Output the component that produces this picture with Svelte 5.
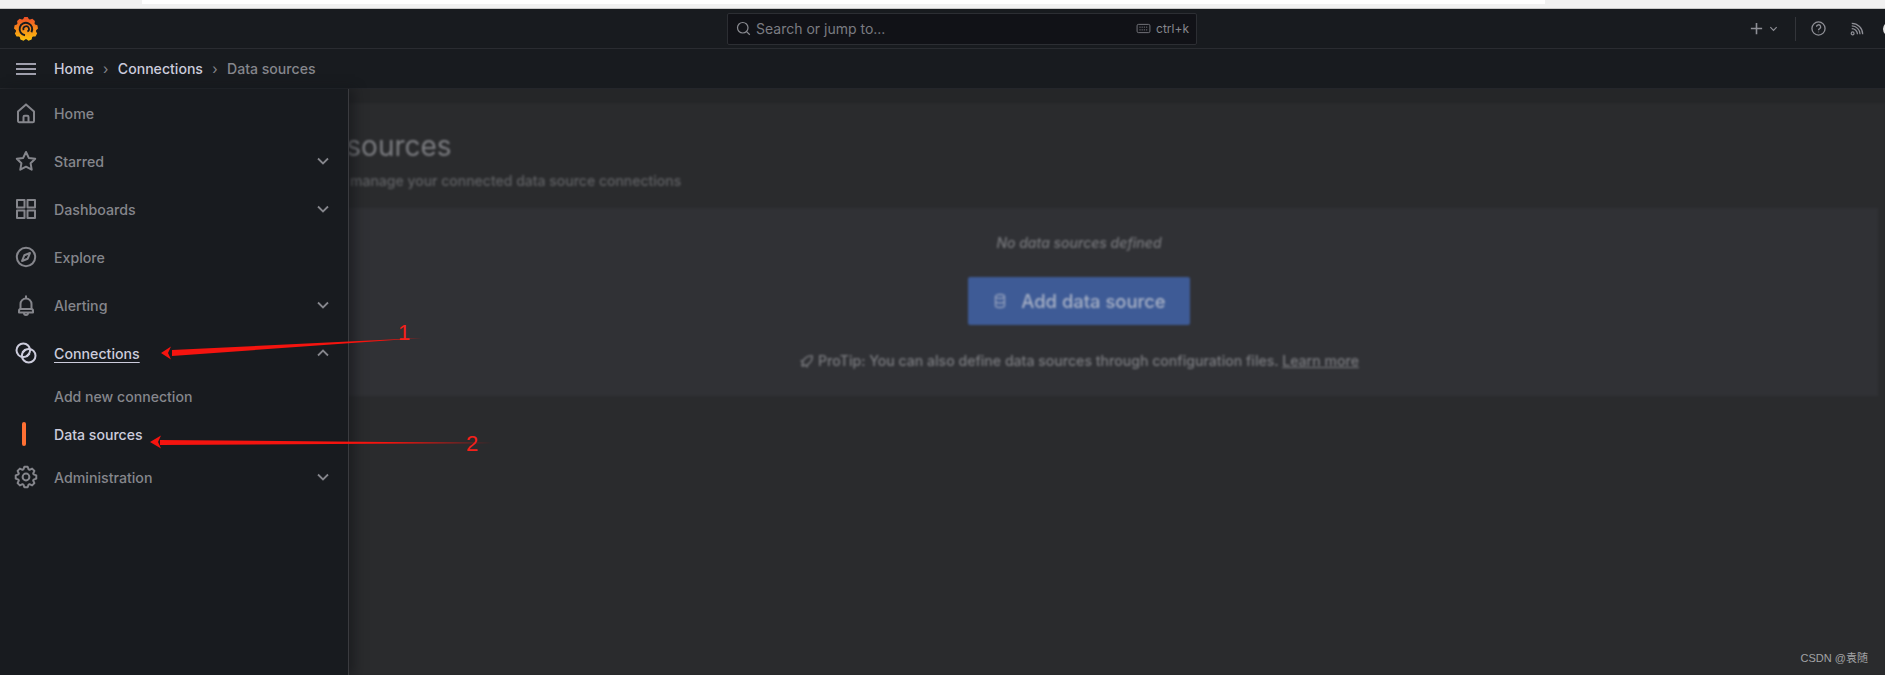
<script>
  const navTop = [
    { label: 'Home', icon: 'home' },
    { label: 'Starred', icon: 'star', chevron: 'down' },
    { label: 'Dashboards', icon: 'apps', chevron: 'down' },
    { label: 'Explore', icon: 'compass' },
    { label: 'Alerting', icon: 'bell', chevron: 'down' },
    { label: 'Connections', icon: 'link', chevron: 'up', active: true }
  ];

  function gearPath(cx, cy, teeth, outer, inner) {
    const step = (Math.PI * 2) / teeth;
    let d = '';
    for (let i = 0; i < teeth; i++) {
      const a = i * step - Math.PI / 2;
      const pts = [
        [a - step * 0.42, inner],
        [a - step * 0.2, outer],
        [a + step * 0.2, outer],
        [a + step * 0.42, inner]
      ];
      for (const [t, r] of pts) {
        d += (d ? 'L' : 'M') + (cx + r * Math.cos(t)).toFixed(2) + ' ' + (cy + r * Math.sin(t)).toFixed(2);
      }
    }
    return d + 'Z';
  }

  const gear = gearPath(12, 12, 8, 10.4, 8);
  const flame = gearPath(12, 12, 9, 12, 10.2);
</script>

{#snippet icon(name)}
  <svg class="nav-icon" viewBox="0 0 24 24" aria-hidden="true">
    {#if name === 'home'}
      <path d="M4 20V10.4L12 3.4l8 7V20a1.200 1.200 0 0 1-1.200 1.200H5.200A1.200 1.200 0 0 1 4 20Z" />
      <path d="M9.500 21v-5a1.200 1.200 0 0 1 1.200-1.200h2.600A1.200 1.200 0 0 1 14.500 16v5" />
    {:else if name === 'star'}
      <path d="M12 3l2.800 5.900 6.400.9-4.600 4.500 1.100 6.400L12 17.700l-5.700 3 1.100-6.400-4.600-4.500 6.400-.9Z" />
    {:else if name === 'apps'}
      <rect x="3" y="3" width="7.500" height="7.500" />
      <rect x="13.500" y="3" width="7.500" height="7.500" />
      <rect x="3" y="13.500" width="7.500" height="7.500" />
      <rect x="13.500" y="13.500" width="7.500" height="7.500" />
    {:else if name === 'compass'}
      <circle cx="12" cy="12" r="9.200" />
      <path d="M16 8l-2.300 5.700L8 16l2.300-5.700Z" />
    {:else if name === 'bell'}
      <path d="M6.500 16v-5a5.500 5.500 0 0 1 11 0v5" />
      <path d="M5 19.500v-1.700A1.800 1.800 0 0 1 6.800 16h10.400a1.800 1.800 0 0 1 1.800 1.800v1.700Z" />
      <path d="M12 2.500v3M10 20a2 2 0 0 0 4 0" />
    {:else if name === 'link'}
      <circle cx="9.300" cy="9.300" r="6.800" />
      <circle cx="14.700" cy="14.700" r="6.800" />
      <path d="M8.500 11.500l3-3M12.500 15.500l3-3" stroke-width="2.400" />
    {:else if name === 'gear'}
      <path d={gear} />
      <circle cx="12" cy="12" r="3.400" />
    {/if}
  </svg>
{/snippet}

{#snippet chevron(dir)}
  <svg class="chevron" viewBox="0 0 16 16" aria-hidden="true">
    <path d={dir === 'up' ? 'M3 10.500l5-5 5 5' : 'M3 5.500l5 5 5-5'} />
  </svg>
{/snippet}

<div class="page">
  <div class="browser-edge"><div class="browser-field"></div></div>

  <header class="topbar">
    <svg class="logo" viewBox="0 0 24 24" aria-label="Grafana">
      <defs>
        <linearGradient id="flame" x1="0.5" y1="0" x2="0.5" y2="1">
          <stop offset="0" stop-color="#ee4f27" />
          <stop offset="1" stop-color="#fcc30c" />
        </linearGradient>
      </defs>
      <path d={flame} fill="url(#flame)" />
      <path d="M17.400 15.200A6.300 6.300 0 1 0 11 18.300" fill="none" stroke="#181b1f" stroke-width="1.900" />
      <path d="M9.600 13.200a2.800 2.800 0 1 1 3.800 1.400" fill="none" stroke="#181b1f" stroke-width="1.700" />
    </svg>

    <div class="search">
      <svg class="search-icon" viewBox="0 0 16 16" aria-hidden="true">
        <circle cx="7.200" cy="7.200" r="5.600" />
        <path d="M11.300 11.300l3.400 3.400" />
      </svg>
      <span class="search-text">Search or jump to...</span>
      <svg class="kbd-icon" viewBox="0 0 16 12" aria-hidden="true">
        <rect x="1" y="1.500" width="14" height="9" rx="1.500" />
        <path d="M3.500 4.500h9M3.500 7.500h9" stroke-dasharray="1.400 1" />
      </svg>
      <span class="search-key">ctrl+k</span>
    </div>

    <div class="top-actions">
      <svg class="plus" viewBox="0 0 16 16" aria-hidden="true"><path d="M8 2v12M2 8h12" /></svg>
      <svg class="mini-chevron" viewBox="0 0 10 10" aria-hidden="true"><path d="M1.500 3.500L5 7l3.500-3.500" /></svg>
      <span class="divider"></span>
      <svg class="help" viewBox="0 0 16 16" aria-hidden="true">
        <circle cx="8" cy="8" r="7" />
        <path d="M5.900 6.200a2.200 2.200 0 1 1 3.300 1.900c-.8.4-1.200.8-1.200 1.700" />
        <path d="M8 11.400v.6" />
      </svg>
      <svg class="rss" viewBox="0 0 16 16" aria-hidden="true">
        <circle cx="3" cy="13" r="1.600" />
        <path d="M2 7.500a6.500 6.500 0 0 1 6.500 6.500M2 4.500A9.500 9.500 0 0 1 11.500 14M2 1.500A12.500 12.500 0 0 1 14.500 14" />
      </svg>
      <span class="avatar"></span>
    </div>
  </header>

  <div class="crumbs">
    <svg class="burger" viewBox="0 0 20 12" aria-hidden="true"><path d="M0 1h20M0 6h20M0 11h20" /></svg>
    <a class="crumb">Home</a>
    <span class="sep">›</span>
    <a class="crumb">Connections</a>
    <span class="sep">›</span>
    <span class="crumb current">Data sources</span>
  </div>

  <div class="body">
    <main class="main">
      <div class="panel">
        <h1>Data sources</h1>
        <p class="subtitle">View and manage your connected data source connections</p>
        <section class="empty">
          <p class="empty-title">No data sources defined</p>
          <div class="cta">
            <svg viewBox="0 0 16 16" aria-hidden="true">
              <ellipse cx="8" cy="3.500" rx="4.500" ry="2" />
              <path d="M3.500 3.500v9c0 1.100 2 2 4.500 2s4.500-.9 4.500-2v-9M3.500 8c0 1.100 2 2 4.500 2s4.500-.9 4.500-2" />
            </svg>
            <span>Add data source</span>
          </div>
          <p class="tip">
            <svg viewBox="0 0 16 16" aria-hidden="true">
              <path d="M14 2c-4-.3-7 1.200-9 4.500L2.500 7.500l2 2L3 12l1 1 2.500-1.500 2 2 1-2.500C12.800 9 14.300 6 14 2Z" />
            </svg>
            <span>ProTip: You can also define data sources through configuration files. <u>Learn more</u></span>
          </p>
        </section>
      </div>
    </main>

    <nav class="sidebar">
      {#each navTop as item}
        <div class="nav-row" class:active={item.active}>
          {@render icon(item.icon)}
          <span class="nav-label">{item.label}</span>
          {#if item.chevron}{@render chevron(item.chevron)}{/if}
        </div>
      {/each}
      <div class="sub-row">Add new connection</div>
      <div class="sub-row current"><span class="marker"></span>Data sources</div>
      <div class="nav-row">
        {@render icon('gear')}
        <span class="nav-label">Administration</span>
        {@render chevron('down')}
      </div>
    </nav>
  </div>

  <svg class="notes" viewBox="0 0 1885 675" aria-hidden="true">
    <polygon points="422,338 172,350 172,356" />
    <polygon points="161,353 171,346.500 168,353 171,359.500" />
    <polygon points="493,443 160,440 160,445" />
    <polygon points="150,442 161,435.500 158,442 161,448.500" />
    <text x="404" y="340">1</text>
    <text x="472" y="451">2</text>
  </svg>

  <div class="watermark">CSDN @袁随</div>
</div>

<style>
  :global(body) {
    margin: 0;
    background: #2a2b2d;
  }

  .page {
    position: relative;
    display: flex;
    flex-direction: column;
    height: 675px;
    overflow: hidden;
    font-family: Inter, "Noto Sans", sans-serif;
    font-size: 14px;
    color: #ccccdc;
  }

  .browser-edge {
    flex: none;
    height: 9px;
    box-sizing: border-box;
    padding: 0 340px 0 142px;
    background: #f1f1f1;
    border-bottom: 1px solid #c8c8c8;
  }

  .browser-field {
    height: 4px;
    background: #fff;
  }

  .topbar {
    flex: none;
    height: 40px;
    box-sizing: border-box;
    position: relative;
    display: flex;
    align-items: center;
    justify-content: center;
    background: #181b1f;
    border-bottom: 1px solid #2a2c31;
  }

  .logo {
    position: absolute;
    left: 14px;
    top: 8px;
    width: 24px;
    height: 24px;
  }

  .search {
    width: 470px;
    height: 32px;
    margin-left: 39px;
    box-sizing: border-box;
    display: flex;
    align-items: center;
    padding: 0 7px 0 8px;
    background: #111217;
    border: 1px solid #2c2e33;
    border-radius: 2px;
    color: #7b7c82;
  }

  .search-icon {
    width: 15px;
    height: 15px;
    margin-right: 5px;
    fill: none;
    stroke: #8a8b91;
    stroke-width: 1.300;
  }

  .search-text {
    flex: 1;
    font-size: 14px;
  }

  .kbd-icon {
    width: 15px;
    height: 11px;
    margin-right: 5px;
    fill: none;
    stroke: #7b7c82;
    stroke-width: 1;
  }

  .search-key {
    font-size: 12px;
    color: #86878d;
  }

  .top-actions {
    position: absolute;
    right: 0;
    top: 0;
    bottom: 0;
    width: 136px;
    display: flex;
    align-items: center;
    overflow: hidden;
  }

  .top-actions svg {
    fill: none;
    stroke: #8e8f96;
    flex: none;
  }

  .plus {
    width: 15px;
    height: 15px;
    stroke-width: 1.700;
  }

  .mini-chevron {
    width: 9px;
    height: 9px;
    margin-left: 5px;
    stroke-width: 1.300;
  }

  .divider {
    flex: none;
    width: 1px;
    height: 24px;
    margin: 0 15px 0 17px;
    background: #33353a;
  }

  .help {
    width: 15px;
    height: 15px;
    stroke-width: 1.400;
  }

  .rss {
    width: 14px;
    height: 14px;
    margin-left: 24px;
    stroke-width: 1.400;
  }

  .avatar {
    flex: none;
    width: 24px;
    height: 14px;
    margin-left: 19px;
    border-radius: 7px;
    background: #e4e4e4;
  }

  .crumbs {
    flex: none;
    height: 40px;
    box-sizing: border-box;
    display: flex;
    align-items: center;
    padding-left: 16px;
    background: #181b1f;
    border-bottom: 1px solid #24262b;
  }

  .burger {
    width: 20px;
    height: 12px;
    margin-right: 18px;
    fill: none;
    stroke: #ccccdc;
    stroke-width: 1.600;
  }

  .crumb {
    font-size: 14.100px;
    font-weight: 500;
    color: #ccccdc;
  }

  .crumb.current {
    color: #85868c;
  }

  .sep {
    width: 24px;
    text-align: center;
    color: #85868c;
    font-size: 14px;
  }

  .body {
    position: relative;
    flex: 1;
    min-height: 0;
  }

  .main {
    height: 100%;
    box-sizing: border-box;
    padding-top: 14px;
    background: #252628;
  }

  .panel {
    height: 100%;
    box-sizing: border-box;
    background: #2a2b2d;
    filter: blur(1.300px);
    padding: 27px 7px 0 277.500px;
  }

  h1 {
    margin: 0;
    font-size: 28px;
    line-height: 32px;
    font-weight: 400;
    color: #7b7c80;
  }

  .subtitle {
    margin: 10px 0 0 7px;
    font-size: 14px;
    line-height: 17px;
    font-weight: 500;
    color: #606164;
  }

  .empty {
    margin: 19px 0 0 2.500px;
    height: 188px;
    box-sizing: border-box;
    padding-top: 26px;
    display: flex;
    flex-direction: column;
    align-items: center;
    background: #303135;
  }

  .empty-title {
    margin: 0;
    font-size: 14px;
    line-height: 18px;
    font-style: italic;
    font-weight: 500;
    color: #77787c;
  }

  .cta {
    margin-top: 25px;
    width: 222px;
    height: 48px;
    display: flex;
    align-items: center;
    justify-content: center;
    gap: 13px;
    font-size: 18.400px;
    font-weight: 500;
    color: #a9b2c6;
    background: #3e5b96;
    border-radius: 2px;
  }

  .cta svg {
    width: 16px;
    height: 16px;
    fill: none;
    stroke: #97a3be;
    stroke-width: 1.300;
  }

  .tip {
    margin: 27px 0 0;
    line-height: 18px;
    font-size: 14.100px;
    font-weight: 500;
    color: #7b7c80;
    display: flex;
    align-items: center;
    gap: 4px;
  }

  .tip svg {
    width: 15px;
    height: 15px;
    fill: none;
    stroke: #7b7c80;
    stroke-width: 1.500;
  }

  .sidebar {
    position: absolute;
    left: 0;
    top: 0;
    bottom: 0;
    width: 349px;
    box-sizing: border-box;
    background: #181b1f;
    border-right: 1px solid #3a3b3f;
    box-shadow: 6px 0 10px rgba(18, 20, 24, 0.55);
  }

  .nav-row {
    height: 48px;
    position: relative;
    display: flex;
    align-items: center;
    padding-left: 54px;
    font-size: 14.200px;
    font-weight: 500;
    color: #85868c;
  }

  .nav-row.active {
    color: #ccccdc;
  }

  .nav-row.active .nav-label {
    text-decoration: underline;
    text-underline-offset: 3px;
  }

  .nav-icon {
    position: absolute;
    left: 14px;
    top: 12px;
    width: 24px;
    height: 24px;
    fill: none;
    stroke: #85868c;
    stroke-width: 2;
    stroke-linejoin: round;
  }

  .nav-row.active .nav-icon {
    stroke: #ccccdc;
  }

  .chevron {
    position: absolute;
    left: 315px;
    top: 16px;
    width: 16px;
    height: 16px;
    fill: none;
    stroke: #85868c;
    stroke-width: 1.800;
  }

  .sub-row {
    height: 38px;
    position: relative;
    display: flex;
    align-items: center;
    padding-left: 54px;
    font-size: 14.100px;
    font-weight: 500;
    color: #85868c;
  }

  .sub-row.current {
    color: #ccccdc;
  }

  .marker {
    position: absolute;
    left: 22px;
    top: 7px;
    width: 4px;
    height: 24px;
    border-radius: 2px;
    background: #ff7033;
  }

  .notes {
    position: absolute;
    left: 0;
    top: 0;
    width: 1885px;
    height: 675px;
    pointer-events: none;
  }

  .notes polygon {
    fill: #f5140f;
  }

  .notes text {
    font-family: "Liberation Sans", sans-serif;
    font-size: 22px;
    fill: #f5201a;
    text-anchor: middle;
  }

  .watermark {
    position: absolute;
    right: 17px;
    top: 651px;
    font-family: "Liberation Sans", "Noto Sans CJK SC", sans-serif;
    font-size: 11px;
    line-height: 14px;
    color: #a2a3a5;
  }
</style>
